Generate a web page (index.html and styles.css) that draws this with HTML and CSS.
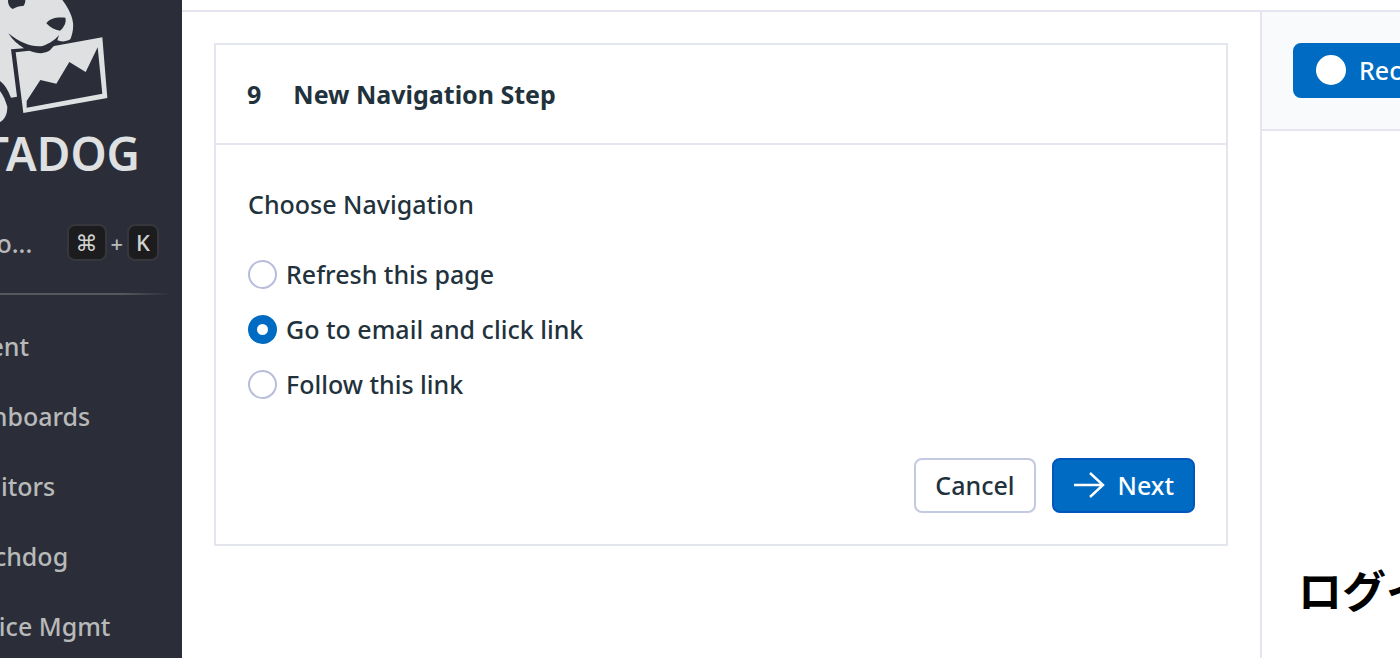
FILE: index.html
```
<!DOCTYPE html>
<html lang="en">
<head>
  <meta charset="UTF-8" />
  <meta name="viewport" content="width=device-width, initial-scale=1.0" />
  <title>Datadog - New Navigation Step</title>
  <link rel="stylesheet" href="styles.css">
</head>
<body>
  <div class="app">
    <aside class="sidebar">
      <svg class="logo" viewBox="-360 0 906 390" aria-hidden="true">
        <g fill="#dee0e2">
          <path d="M-60 0H187C198 14 216 42 219 68C221 88 216 106 211 118C198 125 184 126 172 121L177 105C165 120 150 130 128 138C100 143 62 130 25 100C38 120 54 134 72 145L33 148L51 290L33 293C24 270 14 254 0 243L-60 240Z" />
          <path d="M-60 240C-10 246 10 280 22 320C22 345 12 360 0 366L-60 390Z" />
          <path fill-rule="evenodd" d="M47 157L88 152C110 161 130 162 145 154C152 150 156 143 162 138L307 112L322 294L70 339ZM80 303V323L307 281L293 142L257 216L208 186L169 251L121 240Z" />
        </g>
        <g fill="#2b2e39">
          <path d="M24 0H76C76 8 74 14 70 18C60 17 50 21 38 27C28 22 23 12 24 0Z" />
          <path d="M139 70C148 55 170 50 196 53C200 66 192 82 180 92C164 90 150 82 139 70Z" />
        </g>
      </svg>
      <div class="wordmark">DATADOG</div>
      <div class="search">
        <span>Go to...</span>
        <span class="keys"><kbd>⌘</kbd>+<kbd>K</kbd></span>
      </div>
      <nav class="menu">
        <a href="#">Recent</a>
        <a href="#">Dashboards</a>
        <a href="#">Monitors</a>
        <a href="#">Watchdog</a>
        <a href="#">Service Mgmt</a>
      </nav>
    </aside>

    <div class="content">
      <header class="topbar"></header>
      <div class="columns">
        <main class="steps">
          <form class="card">
            <h2 class="card-title"><span>9</span><span>New Navigation Step</span></h2>
            <div class="card-body">
              <fieldset class="choices">
                <legend>Choose Navigation</legend>
                <label><input type="radio" name="navigation">Refresh this page</label>
                <label><input type="radio" name="navigation" checked>Go to email and click link</label>
                <label><input type="radio" name="navigation">Follow this link</label>
              </fieldset>
              <div class="actions">
                <button type="button" class="btn">Cancel</button>
                <button type="button" class="btn btn-primary">
                  <svg width="32" height="28" viewBox="0 0 32 28" fill="none" stroke="currentColor" stroke-width="2.4" aria-hidden="true">
                    <path d="M1 14H30M17 2L30 14L17 26" />
                  </svg>
                  Next
                </button>
              </div>
            </div>
          </form>
        </main>

        <section class="preview">
          <div class="recorder">
            <button type="button" class="btn btn-record"><span class="dot"></span>Record</button>
          </div>
          <h1 lang="ja">ログイン</h1>
        </section>
      </div>
    </div>
  </div>
</body>
</html>
```
FILE: styles.css
```
* {
  box-sizing: border-box;
}
body {
  margin: 0;
  overflow: hidden;
  font-family: "Noto Sans", "Noto Sans CJK JP", sans-serif;
  font-size: 25px;
  font-weight: 500;
  line-height: 36px;
  color: #22323c;
  background: #fff;
}
.app {
  display: flex;
  min-height: 100vh;
  margin-left: -120px;
}

/* sidebar */
.sidebar {
  flex: none;
  width: 302px;
  color: #b8bab9;
  background: #2b2e39;
}
.logo {
  display: block;
  width: 100%;
}
.wordmark {
  padding-right: 42px;
  font-size: 46px;
  font-weight: 600;
  line-height: 46px;
  text-align: right;
  color: #dee0e2;
}
.search {
  display: flex;
  align-items: center;
  justify-content: space-between;
  height: 119px;
  padding: 16px 23px 0 67px;
  border-bottom: 2px solid;
  border-image: linear-gradient(to right, #55585c 80%, #2b2e39 96%) 1;
}
.keys {
  display: flex;
  align-items: center;
  gap: 4px;
  font-size: 22px;
}
kbd {
  padding: 0 7px;
  border: 2px solid #36373d;
  border-radius: 8px;
  font: 500 22px/33px "Noto Sans", "DejaVu Sans", sans-serif;
  color: #d0d1d1;
  background: #1c1c1f;
}
.menu {
  display: flex;
  flex-direction: column;
  gap: 34px;
  padding: 33px 24px 0 67px;
}
.menu a {
  color: inherit;
  text-decoration: none;
  white-space: nowrap;
}

/* page */
.content {
  flex: 1;
  min-width: 0;
  display: flex;
  flex-direction: column;
}
.topbar {
  height: 12px;
  border-bottom: 2px solid #e4e5ef;
}
.columns {
  flex: 1;
  display: flex;
}
.steps {
  flex: 1;
  padding: 31px 32px;
}
.card {
  border: 2px solid #e3e6ec;
}
.card-title {
  display: flex;
  gap: 32px;
  margin: 0;
  padding: 31px;
  border-bottom: 2px solid #e4e5ef;
  font-size: 25px;
  font-weight: 700;
}
.card-body {
  padding: 41px 31px 31px 32px;
}
.choices {
  display: flex;
  flex-direction: column;
  gap: 19px;
  margin: 0;
  padding: 0;
  border: 0;
}
.choices legend {
  margin-bottom: 34px;
  padding: 0;
}
.choices label {
  display: flex;
  align-items: center;
  gap: 9px;
}
.choices input {
  appearance: none;
  width: 29px;
  height: 29px;
  margin: 0;
  border: 2px solid #b7bddb;
  border-radius: 50%;
  background: #fff;
}
.choices input:checked {
  border: 9px solid #006bc2;
}
.actions {
  display: flex;
  justify-content: flex-end;
  gap: 16px;
  margin-top: 56px;
}
.btn {
  display: flex;
  align-items: center;
  height: 55px;
  padding: 0 19px 1px;
  border: 2px solid #c3c9e0;
  border-radius: 8px;
  font: inherit;
  color: #22323c;
  background: #fff;
}
.btn-primary {
  gap: 13px;
  border-color: #0056bd;
  color: #fff;
  background: #006bc2;
}

/* recorder preview */
.preview {
  flex: none;
  width: 140px;
  border-left: 2px solid #e4e5ef;
  overflow: hidden;
}
.recorder {
  padding: 31px;
  border-bottom: 2px solid #e4e5ef;
  background: #f9fafc;
}
.btn-record {
  gap: 13px;
  padding-left: 21px;
  border-color: #006bc2;
  color: #fff;
  background: #006bc2;
}
.dot {
  width: 30px;
  height: 30px;
  border-radius: 50%;
  background: #fff;
}
.preview h1 {
  margin: 0;
  padding: 428px 0 0 36px;
  font-family: "Noto Sans CJK JP", sans-serif;
  font-size: 44px;
  line-height: 60px;
  white-space: nowrap;
  color: #000;
}
```
